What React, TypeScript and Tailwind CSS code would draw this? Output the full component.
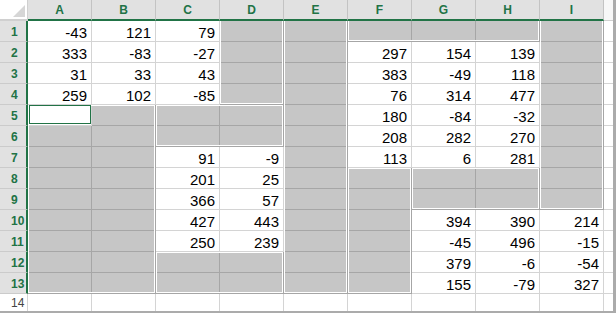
import React from "react";

type Cell = number | "" | null;

const G = null;

// null = blank (shaded), "" = active blank cell
const rows: Cell[][] = [
  [-43, 121, 79, G, G, G, G, G, G],
  [333, -83, -27, G, G, 297, 154, 139, G],
  [31, 33, 43, G, G, 383, -49, 118, G],
  [259, 102, -85, G, G, 76, 314, 477, G],
  ["", G, G, G, G, 180, -84, -32, G],
  [G, G, G, G, G, 208, 282, 270, G],
  [G, G, 91, -9, G, 113, 6, 281, G],
  [G, G, 201, 25, G, G, G, G, G],
  [G, G, 366, 57, G, G, G, G, G],
  [G, G, 427, 443, G, G, 394, 390, 214],
  [G, G, 250, 239, G, G, -45, 496, -15],
  [G, G, G, G, G, G, 379, -6, -54],
  [G, G, G, G, G, G, 155, -79, 327],
];

const cols = ["A", "B", "C", "D", "E", "F", "G", "H", "I"];

// selection areas [colStart, rowStart, colEnd, rowEnd] (0-based cols, 1-based rows)
const areas: [number, number, number, number][] = [
  [0, 5, 1, 13],
  [2, 5, 3, 6],
  [3, 1, 3, 4],
  [4, 1, 4, 13],
  [5, 1, 7, 1],
  [8, 1, 8, 9],
  [5, 8, 5, 13],
  [6, 8, 7, 9],
  [2, 12, 3, 13],
];

const COL_W = 64;
const ROW_H = 21;
const LEFT = 28;
const TOP = 21;

function Corner() {
  return (
    <div className="relative border-r border-b-2 border-[#d0d0d0] bg-white">
      <svg className="absolute bottom-[2px] right-[2px]" width="12" height="12" viewBox="0 0 12 12">
        <polygon points="12,0 12,12 0,12" fill="#d6d6d6" />
      </svg>
    </div>
  );
}

export default function App() {
  return (
    <div
      className="h-[313px] w-[616px] overflow-hidden border-r-[3px] border-b-[2px] border-[#ababab] bg-white"
      style={{ fontFamily: '"Liberation Sans", Arial, sans-serif' }}
    >
      <div className="relative grid grid-cols-[28px_repeat(9,64px)_9px] grid-rows-[21px_repeat(13,21px)_17px]">
        <Corner />
        {cols.map((c) => (
          <div
            key={c}
            className="flex items-center justify-center border-r border-b-2 border-r-[#c3c3c3] border-b-[#217346] bg-[#e1e1e1] text-[12px] font-bold text-[#217346]"
          >
            {c}
          </div>
        ))}
        <div className="border-b border-[#d0d0d0] bg-[#f7f7f7]" />

        {rows.map((row, ri) => (
          <React.Fragment key={ri}>
            <div className="flex items-center border-r-2 border-b border-r-[#217346] border-b-[#cbcbcb] bg-[#e1e1e1] pl-[11px] pt-[1px] text-[12px] font-bold text-[#217346]">
              {ri + 1}
            </div>
            {row.map((v, ci) =>
              v === null ? (
                <div key={ci} className="border-r border-b border-[#a6a6a6] bg-[#c6c6c6]" />
              ) : (
                <div
                  key={ci}
                  className="flex items-end justify-end border-r border-b border-[#d4d4d4] bg-white pr-[4px] text-[15px] leading-[16px] text-black"
                >
                  {v === "" ? "" : v}
                </div>
              )
            )}
            <div className="border-b border-[#d4d4d4] bg-white" />
          </React.Fragment>
        ))}

        <div className="flex items-center border-r border-[#d4d4d4] bg-white pl-[11px] text-[12px] text-[#444]">14</div>
        {cols.map((c) => (
          <div key={c} className="border-r border-[#d4d4d4] bg-white" />
        ))}
        <div className="bg-white" />

        {areas.map(([c0, r0, c1, r1], i) => (
          <div
            key={i}
            className="pointer-events-none absolute border border-white"
            style={{
              left: LEFT + c0 * COL_W,
              top: TOP + (r0 - 1) * ROW_H,
              width: (c1 - c0 + 1) * COL_W - 1,
              height: (r1 - r0 + 1) * ROW_H - 1,
              borderTopWidth: r0 === 1 ? 0 : 1,
            }}
          />
        ))}

        {/* active cell A5 */}
        <div className="pointer-events-none absolute left-[29px] top-[105px] h-[19px] w-[62px] border border-[#217346] bg-white" />
      </div>
    </div>
  );
}
